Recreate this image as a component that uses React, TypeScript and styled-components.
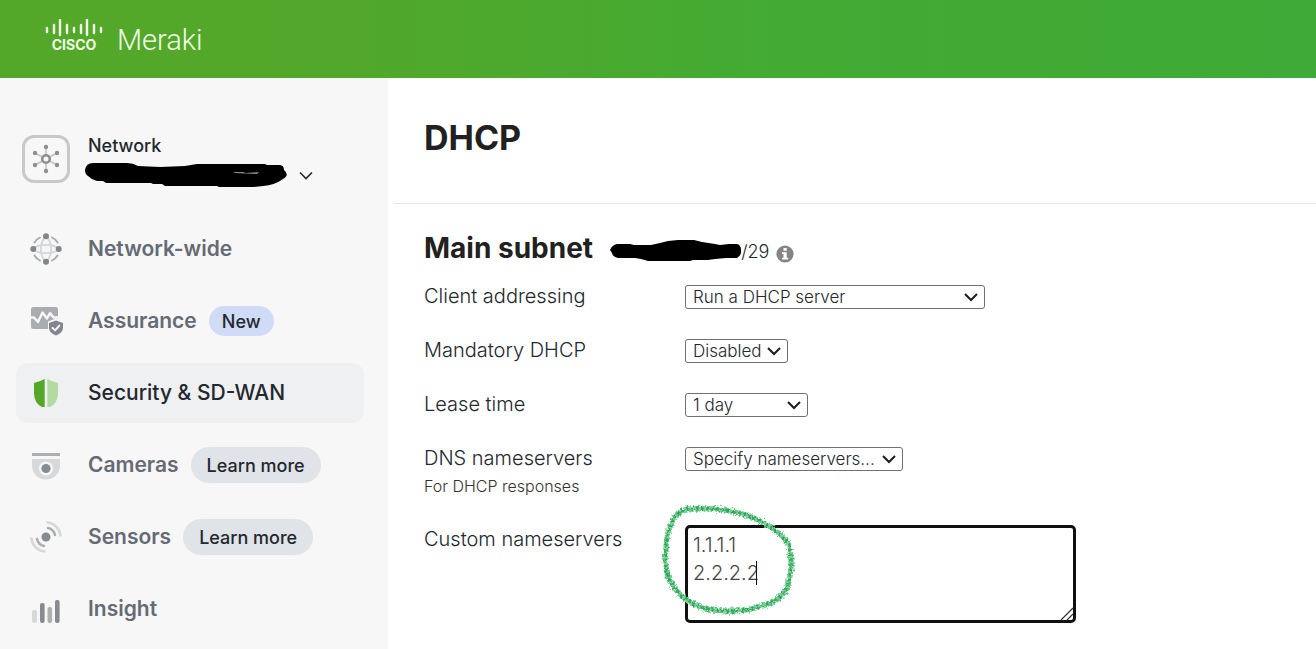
import React from 'react';
import styled, { createGlobalStyle } from 'styled-components';

const GlobalStyle = createGlobalStyle`
  *, *::before, *::after { box-sizing: border-box; }
  html, body, #root { height: 100%; }
  body {
    margin: 0;
    background: #ffffff;
    color: #23282e;
    font-family: Inter, "Liberation Sans", sans-serif;
    overflow: hidden;
  }
`;

const Page = styled.div`
  display: flex;
  flex-direction: column;
  min-height: 100vh;
`;

const TopBar = styled.header`
  display: flex;
  align-items: center;
  height: 78px;
  padding-left: 45px;
  background: linear-gradient(90deg, #54a829 0%, #52a82a 25%, #43ab34 60%, #3faa37 100%);
`;

const Brand = styled.a`
  display: flex;
  align-items: center;
  gap: 14px;
  color: #f1ffe8;
  text-decoration: none;
`;

const CiscoMark = styled.span`
  display: flex;
  flex-direction: column;
  align-items: center;
  font-size: 14px;
  line-height: 16px;
  font-weight: 700;
  padding-bottom: 7px;
`;

const BrandName = styled.span`
  padding-top: 2px;
  font-family: Roboto, sans-serif;
  font-size: 29px;
  line-height: 32px;
  font-weight: 300;
`;

const Body = styled.div`
  display: flex;
  flex: 1;
`;

const Sidebar = styled.aside`
  flex: 0 0 388px;
  padding: 54px 24px 0 16px;
  background: #f7f7f7;
`;

const NetworkPicker = styled.button`
  display: flex;
  align-items: center;
  gap: 15px;
  width: 100%;
  height: 54px;
  padding: 0 0 0 6px;
  border: 0;
  background: none;
  color: #23282e;
  font: inherit;
  text-align: left;
`;

const NetworkBadge = styled.span`
  display: flex;
  flex: none;
  align-items: center;
  justify-content: center;
  width: 48px;
  height: 48px;
  border: 3px solid #c9c9c9;
  border-radius: 12px;
`;

const NetworkText = styled.span`
  display: flex;
  flex-direction: column;
  gap: 4px;
  padding-top: 4px;
  font-size: 18px;
  line-height: 24px;
  font-weight: 500;
`;

const NetworkLabel = styled.span`
  padding-left: 3px;
`;

const NetworkValue = styled.span`
  display: flex;
  align-items: center;
  gap: 12px;
`;

const Nav = styled.nav`
  display: flex;
  flex-direction: column;
  gap: 12px;
  margin-top: 33px;
`;

const NavItem = styled.div<{ $active?: boolean }>`
  display: flex;
  align-items: center;
  gap: 12px;
  height: 60px;
  padding-left: 12px;
  border-radius: 12px;
  background: ${p => (p.$active ? '#eff0f2' : 'transparent')};
`;

const NavLink = styled.a<{ $active?: boolean }>`
  display: flex;
  align-items: center;
  gap: 24px;
  color: ${p => (p.$active ? '#23282e' : '#656b74')};
  font-size: 21px;
  line-height: 28px;
  font-weight: ${p => (p.$active ? 500 : 600)};
  text-decoration: none;
`;

const NewTag = styled.span`
  padding: 2px 13px 0;
  border-radius: 15px;
  background: #d0dcf7;
  color: #23282e;
  font-size: 18px;
  line-height: 28px;
  font-weight: 500;
`;

const LearnMore = styled.button`
  padding: 2px 16px 0;
  border: 0;
  border-radius: 18px;
  background: #e0e3e8;
  color: #23282e;
  font: 500 18px/34px Inter, sans-serif;
`;

const Main = styled.main`
  flex: 1;
  min-width: 0;
`;

const TitleBar = styled.div`
  margin-left: 6px;
  padding: 36px 30px 41px;
  border-bottom: 1px solid #e5e5e5;
`;

const Title = styled.h1`
  margin: 0;
  font-size: 34px;
  line-height: 48px;
  font-weight: 700;
  color: #212121;
`;

const Section = styled.section`
  padding: 24px 36px;
`;

const SectionHead = styled.div`
  display: flex;
  align-items: center;
  height: 40px;
`;

const SectionTitle = styled.h2`
  margin: 0 17px 0 0;
  font-size: 28px;
  line-height: 40px;
  font-weight: 700;
  color: #212121;
`;

const Subnet = styled.span`
  display: flex;
  align-items: center;
  padding-top: 8px;
  font-size: 18px;
  line-height: 24px;
  font-weight: 300;
`;

const InfoButton = styled.button`
  display: flex;
  margin: 12px 0 0 7px;
  padding: 0;
  border: 0;
  background: none;
`;

const Row = styled.div<{ $gap?: number; $labelTop?: number }>`
  display: grid;
  grid-template-columns: 261px 1fr;
  align-items: start;
  margin-top: ${p => p.$gap ?? 30}px;
  > label { padding-top: ${p => p.$labelTop ?? 0}px; }
`;

const FieldLabel = styled.label`
  display: block;
  font-size: 20px;
  line-height: 22px;
  font-weight: 300;
  color: #23282e;
`;

const Hint = styled.p`
  margin: 5px 0 0;
  font-size: 16px;
  line-height: 24px;
  font-weight: 300;
  color: #333333;
`;

const SelectBox = styled.span<{ $width: number }>`
  position: relative;
  display: block;
  width: ${p => p.$width}px;
  max-width: 100%;
  svg {
    position: absolute;
    right: 7px;
    top: 7px;
    pointer-events: none;
  }
`;

const SelectInput = styled.select`
  display: block;
  width: 100%;
  height: 24px;
  padding: 0 7px;
  border: 1px solid #707070;
  border-radius: 3px;
  background: #ffffff;
  color: #23282e;
  font: 300 17px/22px Inter, sans-serif;
  appearance: none;
`;

const AreaBox = styled.div`
  position: relative;
  width: 391px;
  max-width: 100%;
`;

const Area = styled.textarea`
  display: block;
  width: 100%;
  height: 98px;
  padding: 3px 5px;
  border: 3px solid #101010;
  border-radius: 5px;
  outline: none;
  color: #444444;
  font: 300 20px/28px Inter, sans-serif;
  resize: none;
`;

const Caret = styled.span`
  position: absolute;
  left: 71px;
  top: 36px;
  width: 1px;
  height: 24px;
  background: #111111;
`;

const Grip = styled.svg`
  position: absolute;
  right: 2px;
  bottom: 2px;
`;

const Scribble = styled.svg`
  position: absolute;
  left: -27px;
  top: -25px;
  pointer-events: none;
`;

const bars: [number, number, number][] = [
  [2, 9, 13], [9, 6, 14], [15, 1, 16], [22, 6, 14], [29, 9, 13],
  [36, 6, 14], [42, 1, 16], [49, 6, 14], [56, 9, 13],
];

const CiscoBars = () => (
  <svg width="58" height="18" viewBox="0 0 58 18" stroke="#f1ffe8" strokeWidth="2.4" strokeLinecap="round">
    {bars.map(([x, a, b]) => <path key={x} d={`M${x} ${a}V${b}`} />)}
  </svg>
);

const hubNodes = [[15, 3], [26, 9], [26, 21], [15, 27], [4, 21], [4, 9]];

const HubIcon = () => (
  <svg width="30" height="30" viewBox="0 0 30 30" fill="#8f8f8f">
    {hubNodes.map(([x, y]) => (
      <g key={`${x}-${y}`}>
        <path d={`M15 15L${x} ${y}`} stroke="#c4c4c4" strokeWidth="1.6" />
        <circle cx={x} cy={y} r="2.2" />
      </g>
    ))}
    <circle cx="15" cy="15" r="3.8" fill="#f7f7f7" stroke="#8f8f8f" strokeWidth="2.6" />
  </svg>
);

const GlobeIcon = () => (
  <svg width="36" height="36" viewBox="0 0 36 36" fill="none" strokeLinecap="round">
    <g stroke="#d3d5d7" strokeWidth="1.8">
      <path d="M18 5C11 12 11 24 18 31M18 5C25 12 25 24 18 31" />
      <path d="M5 18C10 12.500 26 12.500 31 18M5 18C10 23.500 26 23.500 31 18" />
    </g>
    <path d="M6.500 11.500Q8.500 8 12 6.500M24 6.500Q27.500 8 29.500 11.500M6.500 24.500Q8.500 28 12 29.500M24 29.500Q27.500 28 29.500 24.500" stroke="#a6aaad" strokeWidth="1.9" />
    <g fill="#80868a">
      <circle cx="18" cy="5.300" r="3" /><circle cx="18" cy="30.700" r="3" />
      <circle cx="5.300" cy="18" r="3" /><circle cx="30.700" cy="18" r="3" />
    </g>
  </svg>
);

const AssuranceIcon = () => (
  <svg width="36" height="36" viewBox="0 0 36 36" fill="none">
    <rect x="3" y="4" width="27" height="22" rx="2.500" fill="#a9adb1" />
    <path d="M2 14.500H6L10 19L14.500 9.500L19 15.500L22 10L25.500 14.500H31" stroke="#f7f7f7" strokeWidth="2.4" strokeLinejoin="round" />
    <path d="M28 15.500L36 18.500V24Q36 30.500 28 34Q20 30.500 20 24V18.500Z" fill="#f7f7f7" />
    <path d="M28 17.500L35 20V24.500Q35 30 28 32.500Q21 30 21 24.500V20Z" fill="#80868c" />
    <path d="M24.500 24.800L27 27.300L31.500 22.500" stroke="#fff" strokeWidth="1.900" strokeLinecap="round" strokeLinejoin="round" />
  </svg>
);

const ShieldIcon = () => (
  <svg width="36" height="36" viewBox="0 0 36 36">
    <path d="M16.700 4Q12 6.500 6 8V19Q6.500 28.500 14 32H16.700Z" fill="#54a829" />
    <path d="M19.300 4Q24 6.500 30 8V19Q29.500 28.500 22 32H19.300Z" fill="#b3daa1" />
  </svg>
);

const CameraIcon = () => (
  <svg width="36" height="36" viewBox="0 0 36 36">
    <rect x="4" y="6" width="28" height="3" fill="#abafb2" />
    <path d="M4 12H32V18.500A14 14 0 0 1 4 18.500Z" fill="#d6d8da" />
    <circle cx="18" cy="21.500" r="7" fill="#f7f7f7" />
    <circle cx="18" cy="21.500" r="4.600" fill="#868b91" />
  </svg>
);

const SensorIcon = () => (
  <svg width="36" height="36" viewBox="0 0 36 36" fill="none" strokeWidth="2.600" strokeLinecap="round">
    <circle cx="18" cy="18" r="4.500" fill="#868b91" />
    <path d="M20 9A9.200 9.200 0 0 1 27 16M16 27A9.200 9.200 0 0 1 9 20" stroke="#abafb2" />
    <path d="M19.500 3.500A14.700 14.700 0 0 1 32.500 16.500M16.500 32.500A14.700 14.700 0 0 1 3.500 19.500" stroke="#d6d8da" />
  </svg>
);

const InsightIcon = () => (
  <svg width="36" height="36" viewBox="0 0 36 36">
    <rect x="4" y="19" width="5" height="13" rx="2" fill="#d6d8da" />
    <rect x="12" y="12" width="4.600" height="20" rx="2" fill="#868b91" />
    <rect x="19.500" y="16" width="4.600" height="16" rx="2" fill="#abafb2" />
    <rect x="27" y="9" width="4.600" height="23" rx="2" fill="#868b91" />
  </svg>
);

const InfoIcon = () => (
  <svg width="18" height="18" viewBox="0 0 18 18">
    <circle cx="9" cy="9" r="8.600" fill="#858585" />
    <path d="M7.500 3H10.700V5.800H7.500ZM6 7.200H10.700V12.700H12.200V14.500H6V12.700H7.500V9H6Z" fill="#fff" />
  </svg>
);

const Select = ({ id, value, width }: { id: string; value: string; width: number }) => (
  <SelectBox $width={width}>
    <SelectInput id={id} defaultValue={value}>
      <option>{value}</option>
    </SelectInput>
    <svg width="14" height="10" viewBox="0 0 14 10" fill="none" stroke="#1c1c1c" strokeWidth="2">
      <path d="M1 2L7 8L13 2" />
    </svg>
  </SelectBox>
);

const loop = 'M76 12C60 8 44 8 30 9C14 13 9 30 8 48C6 66 8 78 19 91C32 106 48 111 72 111C98 111 119 102 127 92C133 80 135 62 131 45C123 31 98 16 76 12';

const items = [
  { name: 'Network-wide', Icon: GlobeIcon },
  { name: 'Assurance', Icon: AssuranceIcon, isNew: true },
  { name: 'Security & SD-WAN', Icon: ShieldIcon, active: true },
  { name: 'Cameras', Icon: CameraIcon, learn: true },
  { name: 'Sensors', Icon: SensorIcon, learn: true },
  { name: 'Insight', Icon: InsightIcon },
];

export default function App() {
  return (
    <Page>
      <GlobalStyle />
      <TopBar>
        <Brand href="#">
          <CiscoMark><CiscoBars />CISCO</CiscoMark>
          <BrandName>Meraki</BrandName>
        </Brand>
      </TopBar>
      <Body>
        <Sidebar>
          <NetworkPicker>
            <NetworkBadge><HubIcon /></NetworkBadge>
            <NetworkText>
              <NetworkLabel>Network</NetworkLabel>
              <NetworkValue>
                <svg width="202" height="26" viewBox="0 0 202 26">
                  <path d="M0 8Q1 1 8 1H42Q48 1 53 4L75 5L100 4L112 2H180L182 3H194Q199 3 199 8Q205 13 198 17Q190 23 178 24L168 25H134L132 24H80L77 22H68L66 21H21L18 19H12Q7 18 3 14Q0 12 0 8Z" fill="#000" />
                  <path d="M148 10L158 10L161 11L174 10L172 12L150 11Z" fill="#8c8c8c" />
                </svg>
                <svg width="14" height="9" viewBox="0 0 14 9" fill="none" stroke="#23282e" strokeWidth="1.600">
                  <path d="M1 1.500L7 7.500L13 1.500" />
                </svg>
              </NetworkValue>
            </NetworkText>
          </NetworkPicker>
          <Nav>
            {items.map(({ name, Icon, active, isNew, learn }) => (
              <NavItem key={name} $active={active}>
                <NavLink href="#" $active={active}><Icon />{name}</NavLink>
                {isNew && <NewTag>New</NewTag>}
                {learn && <LearnMore>Learn more</LearnMore>}
              </NavItem>
            ))}
          </Nav>
        </Sidebar>
        <Main>
          <TitleBar><Title>DHCP</Title></TitleBar>
          <Section>
            <SectionHead>
              <SectionTitle>Main subnet</SectionTitle>
              <Subnet>
                <svg width="131" height="24" viewBox="0 1 131 24">
                  <path d="M0 11Q2 6 7 5H20L24 6H41L50 4L58 2L68 1H84L92 3L105 5L110 6L119 5H127Q131 6 131 11Q132 16 127 19H116L105 20L98 21H83L80 22H38L31 20L25 19H8Q2 17 2 14Z" fill="#000" />
                </svg>
                /29
              </Subnet>
              <InfoButton aria-label="Subnet information"><InfoIcon /></InfoButton>
            </SectionHead>
            <Row $gap={17}>
              <FieldLabel htmlFor="addressing">Client addressing</FieldLabel>
              <Select id="addressing" value="Run a DHCP server" width={300} />
            </Row>
            <Row>
              <FieldLabel htmlFor="mandatory">Mandatory DHCP</FieldLabel>
              <Select id="mandatory" value="Disabled" width={103} />
            </Row>
            <Row>
              <FieldLabel htmlFor="lease">Lease time</FieldLabel>
              <Select id="lease" value="1 day" width={123} />
            </Row>
            <Row>
              <div>
                <FieldLabel htmlFor="dns">DNS nameservers</FieldLabel>
                <Hint>For DHCP responses</Hint>
              </div>
              <Select id="dns" value="Specify nameservers..." width={218} />
            </Row>
            <Row $gap={27} $labelTop={3}>
              <FieldLabel htmlFor="custom">Custom nameservers</FieldLabel>
              <AreaBox>
                <Area id="custom" defaultValue={'1.1.1.1\n2.2.2.2'} />
                <Caret />
                <Grip width="14" height="14" viewBox="0 0 14 14" stroke="#333" strokeWidth="1.200">
                  <path d="M1 13L13 1M7 13L13 7" />
                </Grip>
                <Scribble width="144" height="124" viewBox="0 0 144 124" fill="none">
                  <defs>
                    <filter id="chalk" x="-5%" y="-5%" width="110%" height="110%">
                      <feTurbulence type="fractalNoise" baseFrequency="0.45" numOctaves="2" seed="4" />
                      <feDisplacementMap in="SourceGraphic" scale="6" xChannelSelector="R" yChannelSelector="G" />
                    </filter>
                  </defs>
                  <g filter="url(#chalk)" strokeLinejoin="round">
                    <path d={loop} stroke="#7fd09a" strokeWidth="5.500" />
                    <path d={loop} stroke="#2fa858" strokeWidth="3.500" strokeDasharray="3 2" />
                  </g>
                </Scribble>
              </AreaBox>
            </Row>
          </Section>
        </Main>
      </Body>
    </Page>
  );
}
